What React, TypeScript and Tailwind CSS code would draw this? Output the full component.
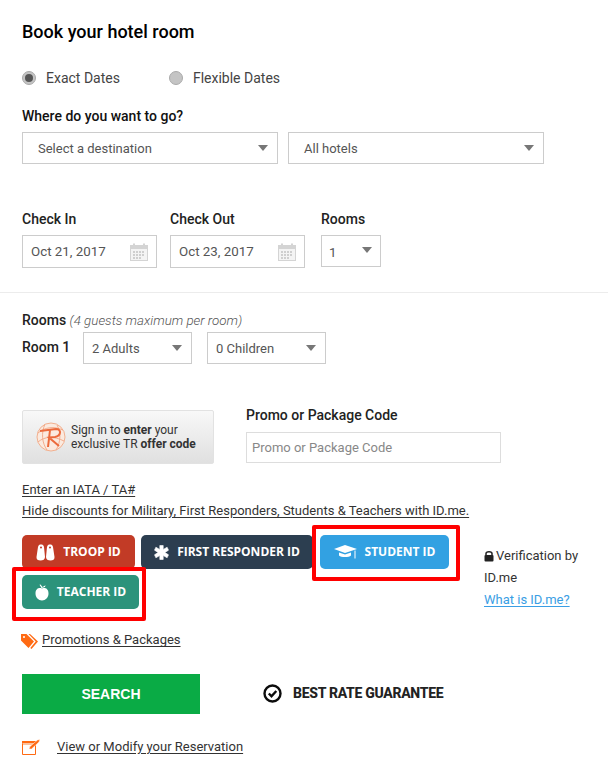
import type { ReactNode } from "react";

function Caret() {
  return <span className="block h-0 w-0 border-x-[5px] border-t-[6px] border-x-transparent border-t-[#777]" />;
}

function Select({ label, className }: { label: string; className: string }) {
  return (
    <div className={`flex items-center justify-between border border-[#ccc] bg-white text-[13px] text-[#555] ${className}`}>
      <span className="mt-[1px]">{label}</span>
      <Caret />
    </div>
  );
}

function CalendarIcon() {
  return (
    <svg width="18" height="18" viewBox="0 0 18 18" className="shrink-0">
      <rect x="0.5" y="2.5" width="17" height="15" fill="#f4f4f4" stroke="#d4d4d4" />
      <rect x="1" y="3" width="16" height="3" fill="#d4d4d4" />
      <rect x="3" y="0.5" width="2" height="3" fill="#d4d4d4" />
      <rect x="13" y="0.5" width="2" height="3" fill="#d4d4d4" />
      <g fill="#cfcfcf">
        <rect x="3" y="8" width="2" height="2" />
        <rect x="6" y="8" width="2" height="2" />
        <rect x="9" y="8" width="2" height="2" />
        <rect x="12" y="8" width="2" height="2" />
        <rect x="3" y="11" width="2" height="2" />
        <rect x="6" y="11" width="2" height="2" />
        <rect x="9" y="11" width="2" height="2" />
        <rect x="12" y="11" width="2" height="2" />
        <rect x="3" y="14" width="2" height="2" />
        <rect x="6" y="14" width="2" height="2" />
        <rect x="9" y="14" width="2" height="2" />
      </g>
    </svg>
  );
}

function DateField({ label, value }: { label: string; value: string }) {
  return (
    <div className="flex w-[135px] flex-col">
      <label className="mb-[7px] text-[14px] leading-[18px] font-medium text-[#222]">{label}</label>
      <div className="flex h-[33px] items-center justify-between border border-[#ccc] px-[8px] text-[13.33px] text-[#555]">
        <span>{value}</span>
        <CalendarIcon />
      </div>
    </div>
  );
}

function IdButton({ icon, label, className }: { icon: ReactNode; label: string; className: string }) {
  return (
    <button className={`flex h-[34px] items-center justify-center gap-[8px] rounded-[5px] text-[12px] font-bold text-white [font-family:'Open_Sans',sans-serif] ${className}`}>
      {icon}
      {label}
    </button>
  );
}

export default function App() {
  return (
    <div className="relative h-[777px] w-[608px] overflow-hidden bg-white text-[14px] text-[#333] [font-family:Roboto,sans-serif]">
      <div className="px-[22px] pt-[20px]">
        <h1 className="text-[18px] leading-[24px] font-medium text-black">Book your hotel room</h1>

        <div className="mt-[24px] flex h-[20px] items-center">
          <span className="flex h-[14px] w-[14px] items-center justify-center rounded-full border border-[#aaa] bg-[#c4c4c4]">
            <span className="h-[8px] w-[8px] rounded-full bg-[#555]" />
          </span>
          <span className="ml-[10px] text-[#444]">Exact Dates</span>
          <span className="ml-[49px] h-[14px] w-[14px] rounded-full border border-[#aaa] bg-[#c4c4c4]" />
          <span className="ml-[10px] text-[#444]">Flexible Dates</span>
        </div>

        <p className="mt-[19px] text-[14px] leading-[18px] font-medium text-[#111]">Where do you want to go?</p>
        <div className="mt-[7px] flex gap-[10px]">
          <Select label="Select a destination" className="h-[32px] w-[256px] pr-[9px] pl-[15px]" />
          <Select label="All hotels" className="h-[32px] w-[256px] pr-[9px] pl-[15px]" />
        </div>

        <div className="mt-[46px] flex">
          <DateField label="Check In" value="Oct 21, 2017" />
          <div className="ml-[13px]">
            <DateField label="Check Out" value="Oct 23, 2017" />
          </div>
          <div className="ml-[16px] flex flex-col">
            <label className="mb-[7px] text-[14px] leading-[18px] font-medium text-[#222]">Rooms</label>
            <div className="flex h-[32px] w-[60px] items-center justify-between border border-[#ccc] pr-[8px] pl-[7px] text-[13.33px] text-[#555]">
              <span className="mt-[3px]">1</span>
              <span className="-mt-[3px]"><Caret /></span>
            </div>
          </div>
        </div>
      </div>

      <div className="mt-[24px] h-px bg-[#ececec]" />

      <div className="px-[22px]">
        <p className="mt-[18px] leading-[18px]">
          <span className="font-medium text-[#222]">Rooms</span>{" "}
          <i className="text-[13.33px] font-light text-[#555]">(4 guests maximum per room)</i>
        </p>
        <div className="mt-[2px] flex items-start">
          <span className="mt-[5px] w-[61px] font-medium text-[#222]">Room 1</span>
          <Select label="2 Adults" className="h-[32px] w-[109px] pr-[9px] pl-[8px]" />
          <Select label="0 Children" className="ml-[15px] h-[32px] w-[119px] pr-[9px] pl-[8px]" />
        </div>

        <div className="mt-[46px] flex">
          <button className="flex h-[54px] w-[192px] items-center rounded-[2px] border border-[#e2e2e2] bg-gradient-to-b from-[#f8f8f8] to-[#e0e0e0] pl-[13px] text-left text-[12px] leading-[14px] text-[#333]">
            <svg width="30" height="30" viewBox="0 0 30 30" className="mr-[5px] shrink-0">
              <circle cx="15" cy="15" r="14" fill="#fbeadf" stroke="#f2b08f" strokeWidth="1" />
              <path d="M2 11C9 5 18 4 27 8M2 20C9 14 18 14 28 19M9 2C5 11 6 21 11 28M21 3C25 10 25 20 20 28" fill="none" stroke="#f2a583" strokeWidth="0.9" />
              <path d="M4 9L20 7C26 7 25 14 19 15L13 15.500L23 24M14 8L12 25" fill="none" stroke="#ec6a3c" strokeWidth="2" />
            </svg>
            <span>
              Sign in to <b className="font-bold">enter</b> your
              <br />
              exclusive TR <b className="font-bold">offer code</b>
            </span>
          </button>
          <div className="ml-[32px]">
            <label className="-mt-[4px] block leading-[18px] font-medium text-[#222]">Promo or Package Code</label>
            <div className="mt-[8px] flex h-[31px] w-[255px] items-center border border-[#ddd] pl-[5px] text-[13px] text-[#888]">
              Promo or Package Code
            </div>
          </div>
        </div>

        <div className="mt-[15px] text-[13px] leading-[21px] text-[#333]">
          <a className="block underline underline-offset-2">Enter an IATA / TA#</a>
          <a className="block underline underline-offset-2">Hide discounts for Military, First Responders, Students &amp; Teachers with ID.me.</a>
        </div>

        <div className="mt-[14px] flex">
          <div className="w-[440px]">
            <div className="flex gap-[6px]">
              <IdButton
                label="TROOP ID"
                className="w-[113px] bg-[#c23b26]"
                icon={
                  <svg width="19" height="17" viewBox="0 0 19 17" fill="#fff">
                    <path fillRule="evenodd" d="M2 3C2.500 1 3.500 .5 5 .5C6.500 .5 7.500 1 8 3L9 13C9 15.500 7 16.500 4.500 16.500C2 16.500 .2 15.500 .5 13ZM5 2.500A1 1 0 1 0 5 4.500A1 1 0 1 0 5 2.500Z" />
                    <path fillRule="evenodd" d="M11 3C11.500 1 12.500 .5 14 .5C15.500 .5 16.500 1 17 3L18.500 13C18.800 15.500 17 16.500 14.500 16.500C12 16.500 10 15.500 10 13ZM14 2.500A1 1 0 1 0 14 4.500A1 1 0 1 0 14 2.500Z" />
                  </svg>
                }
              />
              <IdButton
                label="FIRST RESPONDER ID"
                className="w-[172px] bg-[#2c3e50]"
                icon={
                  <svg width="15" height="15" viewBox="0 0 15 15" fill="#fff" stroke="#fff" strokeWidth="0.6">
                    <path d="M5.800 .5H9.200V4.500L13.100 2.200L14.500 5.200L10.900 7.500L14.500 9.800L13.100 12.800L9.200 10.500V14.500H5.800V10.500L1.900 12.800L.5 9.800L4.100 7.500L.5 5.200L1.900 2.200L5.800 4.500Z" />
                  </svg>
                }
              />
              <IdButton
                label="STUDENT ID"
                className="ml-[1px] w-[129px] bg-[#32a1e2]"
                icon={
                  <svg width="23" height="14" viewBox="0 0 23 14" fill="#fff">
                    <path d="M11 0L23 4L11 8L0 4Z" />
                    <path d="M5 7.500L11 9.500L17 7.500V10.500C15 12.500 7 12.500 5 10.500Z" />
                    <rect x="20.500" y="5.500" width="1" height="8" />
                  </svg>
                }
              />
            </div>
            <IdButton
              label="TEACHER ID"
              className="mt-[6px] w-[117px] bg-[#2c937b]"
              icon={
                <svg width="14" height="17" viewBox="0 0 14 17" fill="#fff">
                  <path d="M7 4.500C9 3.500 13.500 3.800 13.500 9.500C13.500 13.500 10.500 16.500 7 16.500C3.500 16.500 .5 13.500 .5 9.500C.5 3.800 5 3.500 7 4.500Z" />
                  <path d="M6.500 4L4.500 .8L5.500 .5L7.500 3L10.500 1.200L10 3Z" />
                </svg>
              }
            />
          </div>
          <div className="mt-[10px] ml-[22px] text-[13px] leading-[22px] text-[#333]">
            <p className="flex items-center">
              <svg width="10" height="12" viewBox="0 0 10 12" className="mr-[2px]" fill="#222">
                <path d="M2 5V3.500C2 1 8 1 8 3.500V5" fill="none" stroke="#222" strokeWidth="1.500" />
                <rect x="0.5" y="5" width="9" height="6.500" rx="1" />
              </svg>
              Verification by
            </p>
            <p>ID.me</p>
            <a className="text-[#3a9ee4] underline underline-offset-2">What is ID.me?</a>
          </div>
        </div>

        <div className="mt-[20px] flex h-[18px] items-center">
          <svg width="18" height="17" viewBox="0 0 18 17" fill="#ff6a13" className="-ml-px mt-[3px]">
            <path d="M0 1H5.500L13 8.500L7.500 15L0 7.500ZM3 3A1 1 0 1 0 3 5A1 1 0 1 0 3 3Z" fillRule="evenodd" />
            <path d="M7.500 1H9L17 8.500L10.500 16L9.300 15L14.700 8.500Z" />
          </svg>
          <a className="ml-[3px] text-[13px] text-[#333] underline underline-offset-2">Promotions &amp; Packages</a>
        </div>

        <div className="mt-[25px] flex items-center">
          <button className="h-[40px] w-[178px] bg-[#0aab45] text-[14px] font-bold text-white [font-family:'Liberation_Sans',sans-serif]">SEARCH</button>
          <svg width="19" height="19" viewBox="0 0 19 19" className="-mt-[2px] ml-[63px]" fill="none" stroke="#0c0c0c">
            <circle cx="9.500" cy="9.500" r="8" strokeWidth="2.400" />
            <path d="M5.800 9.500L8.500 12.200L13.300 7" strokeWidth="2.400" />
          </svg>
          <span className="-mt-[2px] ml-[11px] text-[14px] font-extrabold tracking-[-0.3px] text-[#222]">BEST RATE GUARANTEE</span>
        </div>

        <div className="mt-[23px] flex items-center">
          <svg width="19" height="16" viewBox="0 0 19 16" fill="none" className="shrink-0">
            <path d="M.5 4.500H13.500V15.500H.5Z" stroke="#ff6a13" />
            <rect x="0" y="2" width="14" height="2" fill="#ff6a13" />
            <rect x="1" y="4" width="12" height="2" fill="#fbc3a0" />
            <path d="M7 10L8 7.500L15.500 1L18 .5L17 3L9.500 10Z" fill="#ff6a13" stroke="#fff" strokeWidth="0.5" />
          </svg>
          <a className="ml-[16px] text-[13px] text-[#333] underline underline-offset-2">View or Modify your Reservation</a>
        </div>
      </div>

      <div className="absolute top-[525px] left-[312px] h-[56px] w-[148px] rounded-[2px] border-[4px] border-[#f00]" />
      <div className="absolute top-[567px] left-[12px] h-[54px] w-[134px] rounded-[2px] border-[4px] border-[#f00]" />
    </div>
  );
}
